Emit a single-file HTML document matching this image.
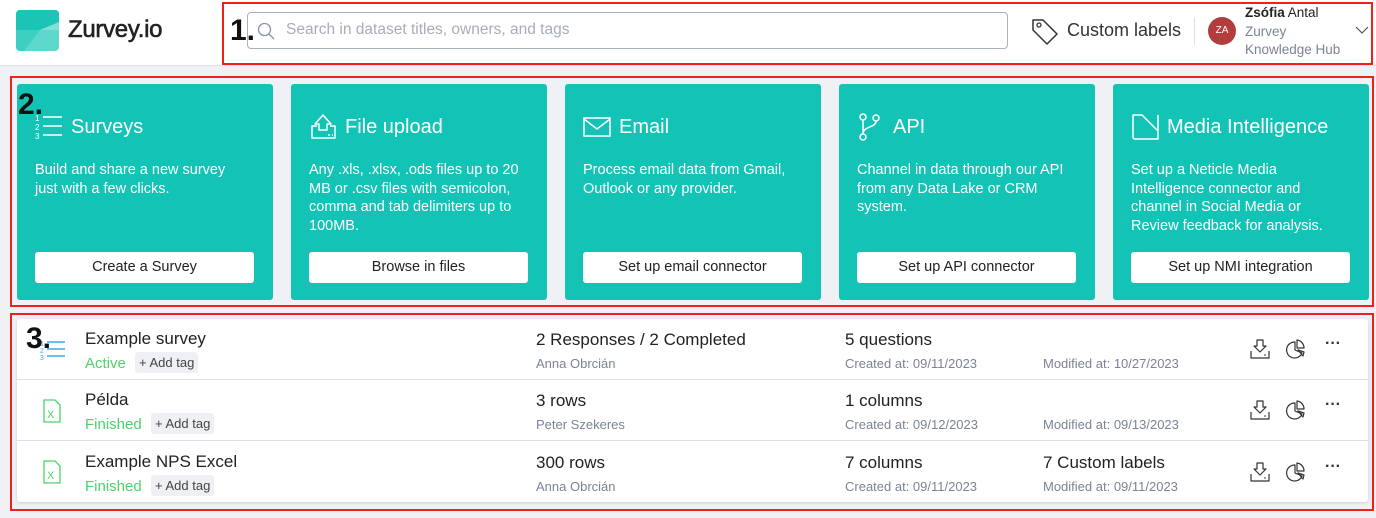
<!DOCTYPE html><html><head><meta charset="utf-8"><style>
*{box-sizing:border-box;margin:0;padding:0}
body{width:1376px;height:518px;background:#f0f1f5;font-family:"Liberation Sans",sans-serif;position:relative;overflow:hidden;color:#222}
.abs{position:absolute}
.hdr{left:0;top:0;width:1376px;height:66px;background:#fff;border-bottom:1px solid #dde0e8}
.red{position:absolute;border:2px solid #f0211a}
.num{position:absolute;font-weight:bold;font-size:30px;color:#111}
.card{position:absolute;top:84px;width:256px;height:216px;background:#13c4b6;border-radius:3px;color:#fff}
.card h3{position:absolute;left:54px;top:32px;font-size:20px;font-weight:normal}
.card p{position:absolute;left:18px;top:77px;width:214px;font-size:14.5px;line-height:18.5px}
.card .btn{position:absolute;left:18px;top:168px;width:219px;height:31px;background:#fff;border-radius:3px;color:#222;font-size:14.5px;text-align:center;line-height:31px}
.card svg{position:absolute;left:17px;top:28px}
.panel{left:17px;top:319px;width:1351px;height:183px;background:#fff;border-radius:3px;box-shadow:0 1px 3px #ccd}
.row{position:absolute;left:0;width:1351px;height:61px;border-bottom:1px solid #dde0e8}
.t{position:absolute;font-size:17px;color:#222}
.s{position:absolute;font-size:13px;color:#7b8396}
.st{position:absolute;font-size:15px;color:#4cd36a}
.tag{position:absolute;background:#eef0f3;border-radius:3px;font-size:13px;color:#444;padding:3px 4px}
</style></head><body>
<div class="abs hdr"></div>
<svg class="abs" style="left:16px;top:10px" width="43" height="41" viewBox="0 0 43 41"><rect width="43" height="41" rx="4" fill="#5ed8cc"/><path d="M0 4a4 4 0 0 1 4-4h35a4 4 0 0 1 4 4v8L24 20H0z" fill="#1cc4b6"/><path d="M24 20L43 12v8z" fill="#7fe0d6"/><path d="M0 20h24L8 41H4a4 4 0 0 1-4-4z" fill="#3ccfc2"/></svg>
<div class="abs" style="left:68px;top:16px;font-size:24px;color:#222;letter-spacing:-0.3px;-webkit-text-stroke:0.6px #222">Zurvey.io</div>
<div class="red" style="left:222px;top:2px;width:1151px;height:63px"></div>
<div class="num" style="left:230px;top:14px">1.</div>
<div class="abs" style="left:247px;top:12px;width:761px;height:37px;border:1px solid #a9b0c0;border-radius:4px"></div>
<svg class="abs" style="left:257px;top:22px" width="18" height="18"><circle cx="7.5" cy="7.5" r="6" fill="none" stroke="#8a92a3" stroke-width="1.3"/><path d="M12 12l5 5" stroke="#8a92a3" stroke-width="1.3"/></svg>
<div class="abs" style="left:286px;top:21px;font-size:15.5px;color:#a6adba">Search in dataset titles, owners, and tags</div>
<svg class="abs" style="left:1030px;top:16px" width="30" height="30" viewBox="0 0 30 30"><path d="M3 4h10l14 14-10 10L3 14z" fill="none" stroke="#333" stroke-width="1.5" stroke-linejoin="round"/><circle cx="9" cy="9" r="2" fill="none" stroke="#333" stroke-width="1.3"/></svg>
<div class="abs" style="left:1067px;top:20px;font-size:18px;color:#333">Custom labels</div>
<div class="abs" style="left:1194px;top:17px;width:1px;height:28px;background:#dde0e8"></div>
<div class="abs" style="left:1208px;top:17px;width:28px;height:28px;border-radius:50%;background:#b33c3c;color:#fff;font-size:10px;text-align:center;line-height:28px">ZA</div>
<div class="abs" style="left:1245px;top:4px;font-size:13.5px;line-height:18.5px;color:#222"><b>Zsófia</b> Antal<br><span style="color:#7b8396">Zurvey<br>Knowledge Hub</span></div>
<svg class="abs" style="left:1355px;top:26px" width="14" height="9"><path d="M1 1l6 6 6-6" fill="none" stroke="#555" stroke-width="1.2"/></svg>

<div class="red" style="left:10px;top:76px;width:1364px;height:231px"></div>
<div class="card" style="left:17px"><svg width="30" height="28" viewBox="0 0 30 28"><text x="1" y="9" font-size="8" fill="#fff" font-family="Liberation Sans">1</text><text x="1" y="18" font-size="8" fill="#fff" font-family="Liberation Sans">2</text><text x="1" y="27" font-size="8" fill="#fff" font-family="Liberation Sans">3</text><path d="M9 5h19M9 14h19M9 23h19" stroke="#fff" stroke-width="1.5"/></svg><h3>Surveys</h3><p>Build and share a new survey just with a few clicks.</p><div class="btn">Create a Survey</div></div>
<div class="card" style="left:291px"><svg width="30" height="30" viewBox="0 0 30 30"><path d="M9 14H4v12h23V14h-5M11 18V12H7l8-9 8 9h-4v6z" fill="none" stroke="#fff" stroke-width="1.5" stroke-linejoin="round"/><path d="M20 23h2M24 23h1" stroke="#fff" stroke-width="1.5"/></svg><h3>File upload</h3><p>Any .xls, .xlsx, .ods files up to 20 MB or .csv files with semicolon, comma and tab delimiters up to 100MB.</p><div class="btn">Browse in files</div></div>
<div class="card" style="left:565px"><svg width="30" height="30" viewBox="0 0 30 30"><rect x="2" y="6" width="26" height="18" fill="none" stroke="#fff" stroke-width="1.5"/><path d="M2 7l13 10 13-10" fill="none" stroke="#fff" stroke-width="1.5"/></svg><h3>Email</h3><p>Process email data from Gmail, Outlook or any provider.</p><div class="btn">Set up email connector</div></div>
<div class="card" style="left:839px"><svg width="30" height="30" viewBox="0 0 30 30"><circle cx="7" cy="5" r="3" fill="none" stroke="#fff" stroke-width="1.5"/><circle cx="7" cy="25" r="3" fill="none" stroke="#fff" stroke-width="1.5"/><circle cx="20" cy="6" r="3" fill="none" stroke="#fff" stroke-width="1.5"/><path d="M7 8v14M20 9c0 7-13 5-13 13" fill="none" stroke="#fff" stroke-width="1.5"/></svg><h3>API</h3><p>Channel in data through our API from any Data Lake or CRM system.</p><div class="btn">Set up API connector</div></div>
<div class="card" style="left:1113px"><svg width="30" height="30" viewBox="0 0 30 30"><path d="M3 3h9l16 16v8H5a2 2 0 0 1-2-2zM12 3l16 16V3" fill="none" stroke="#fff" stroke-width="1.5" stroke-linejoin="round"/></svg><h3>Media Intelligence</h3><p>Set up a Neticle Media Intelligence connector and channel in Social Media or Review feedback for analysis.</p><div class="btn">Set up NMI integration</div></div>
<div class="num" style="left:18px;top:88px">2.</div>

<div class="red" style="left:10px;top:313px;width:1364px;height:198px"></div>
<div class="abs panel">
<div class="row" style="top:0"></div><div class="row" style="top:61px"></div><div class="row" style="top:122px;border:none"></div>
</div>
<svg class="abs" style="left:40px;top:338px" width="26" height="22"><text x="0" y="8" font-size="7" fill="#3aa9f0">1</text><text x="0" y="15" font-size="7" fill="#3aa9f0">2</text><text x="0" y="22" font-size="7" fill="#3aa9f0">3</text><path d="M7 4h18M7 11h18M7 18h18" stroke="#3aa9f0" stroke-width="1.5"/></svg>
<div class="num" style="left:26px;top:322px">3.</div>
<svg class="abs" style="left:43px;top:399px" width="18" height="24"><path d="M1 1h11l5 5v17H1z" fill="none" stroke="#4cd36a" stroke-width="1.3"/><text x="4" y="19" font-size="11" fill="#4cd36a">X</text></svg>
<svg class="abs" style="left:43px;top:460px" width="18" height="24"><path d="M1 1h11l5 5v17H1z" fill="none" stroke="#4cd36a" stroke-width="1.3"/><text x="4" y="19" font-size="11" fill="#4cd36a">X</text></svg>

<div class="t" style="left:85px;top:329px">Example survey</div><div class="st" style="left:85px;top:355px">Active</div><div class="tag" style="left:135px;top:352px">+ Add tag</div>
<div class="t" style="left:536px;top:330px">2 Responses / 2 Completed</div><div class="s" style="left:536px;top:356px">Anna Obrcián</div>
<div class="t" style="left:845px;top:330px">5 questions</div><div class="s" style="left:845px;top:356px">Created at: 09/11/2023</div><div class="s" style="left:1043px;top:356px">Modified at: 10/27/2023</div>

<div class="t" style="left:85px;top:390px">Példa</div><div class="st" style="left:85px;top:416px">Finished</div><div class="tag" style="left:151px;top:413px">+ Add tag</div>
<div class="t" style="left:536px;top:391px">3 rows</div><div class="s" style="left:536px;top:417px">Peter Szekeres</div>
<div class="t" style="left:845px;top:391px">1 columns</div><div class="s" style="left:845px;top:417px">Created at: 09/12/2023</div><div class="s" style="left:1043px;top:417px">Modified at: 09/13/2023</div>

<div class="t" style="left:85px;top:452px">Example NPS Excel</div><div class="st" style="left:85px;top:478px">Finished</div><div class="tag" style="left:151px;top:475px">+ Add tag</div>
<div class="t" style="left:536px;top:453px">300 rows</div><div class="s" style="left:536px;top:479px">Anna Obrcián</div>
<div class="t" style="left:845px;top:453px">7 columns</div><div class="s" style="left:845px;top:479px">Created at: 09/11/2023</div>
<div class="t" style="left:1043px;top:453px">7 Custom labels</div><div class="s" style="left:1043px;top:479px">Modified at: 09/11/2023</div>

<div id="ic"></div>
<script>
var h='';[339,400,462].forEach(function(y){
h+='<svg class="abs" style="left:1250px;top:'+y+'px" width="20" height="20" viewBox="0 0 20 20"><path d="M7 1h6v6h3l-6 6-6-6h3zM1 12v7h18v-7" fill="none" stroke="#333" stroke-width="1.2" stroke-linejoin="round"/><path d="M14 16h2" stroke="#333"/></svg>';
h+='<svg class="abs" style="left:1286px;top:'+y+'px" width="20" height="20" viewBox="0 0 20 20"><path d="M9 3a8 8 0 1 0 7 11L9 11z M11 1v8l7 0a8 8 0 0 0-7-8z M12 11l6 2 -1 4z" fill="none" stroke="#333" stroke-width="1.2" stroke-linejoin="round"/></svg>';
h+='<div class="abs" style="left:1325px;top:'+(y-4)+'px;font-size:16px;color:#333;font-weight:bold">···</div>';});
document.getElementById('ic').innerHTML=h;
</script>
</body></html>
